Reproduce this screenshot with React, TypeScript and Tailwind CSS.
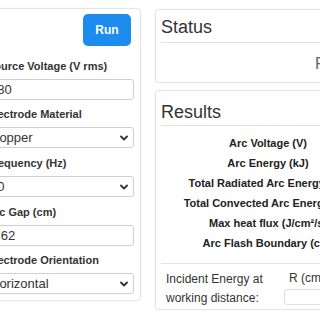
import { ReactNode } from "react";

const font = { fontFamily: '"Liberation Sans", Arial, sans-serif' };

const Chevron = () => (
  <svg width="8" height="6" viewBox="0 0 8 6" className="shrink-0">
    <polyline points="1,1.5 4,4.5 7,1.5" fill="none" stroke="#333" strokeWidth="1.8" strokeLinecap="round" strokeLinejoin="round" />
  </svg>
);

interface FieldProps {
  label: string;
  value: string;
  select?: boolean;
  className?: string;
}

const Field = ({ label, value, select, className }: FieldProps) => (
  <div className={className}>
    <div className="text-[11px] leading-[14px] font-bold text-[#333] whitespace-nowrap">{label}</div>
    <div className="mt-[6px] h-[21px] flex items-center justify-between border border-[#cfcfcf] rounded-[3px] bg-white pl-[2px] pr-[5px]">
      <span className="text-[13px] text-[#333] leading-none">{value}</span>
      {select && <Chevron />}
    </div>
  </div>
);

const Card = ({ children, className }: { children: ReactNode; className?: string }) => (
  <div className={`border border-[#e4e4e4] rounded-[4px] bg-white shadow-[0_0_2px_rgba(0,0,0,0.06)] ${className ?? ""}`}>
    {children}
  </div>
);

const rows = [
  "Arc Voltage (V)",
  "Arc Energy (kJ)",
  "Total Radiated Arc Energy (kJ)",
  "Total Convected Arc Energy (kJ)",
  "Max heat flux (J/cm²/s)",
  "Arc Flash Boundary (cm)",
];

export default function App() {
  return (
    <div className="w-[320px] h-[320px] overflow-hidden bg-white flex items-start" style={font}>
      {/* inputs panel, cut off on the left */}
      <Card className="ml-[-20px] mt-[8px] w-[161px] shrink-0 pl-[6px] pr-[6px] pt-[5px] pb-[6px]">
        <div className="flex">
          <button className="ml-auto mr-[3px] w-[48px] h-[32px] rounded-[5px] bg-[#1c8cef] text-white text-[12px] font-bold">
            Run
          </button>
        </div>
        <Field className="mt-[13px]" label="Source Voltage (V rms)" value="480" />
        <Field className="mt-[7px]" label="Electrode Material" value="Copper" select />
        <Field className="mt-[8px]" label="Frequency (Hz)" value="60" select />
        <Field className="mt-[8px]" label="Arc Gap (cm)" value="1.62" />
        <Field className="mt-[7px]" label="Electrode Orientation" value="Horizontal" select />
      </Card>

      <div className="ml-[14px] mt-[9px] w-[260px] shrink-0 flex flex-col gap-[7px]">
        <Card className="h-[74px] px-[5px]">
          <div className="pt-[6px] pb-[4px] text-[18px] leading-[22px] text-[#333] border-b border-[#e2e2e2]">Status</div>
          <div className="pl-[154px] pt-[11px] text-[16px] leading-[20px] text-[#666]">Ready</div>
        </Card>

        <Card className="h-[220px] px-[5px]">
          <div className="pt-[10px] pb-[2px] text-[18px] leading-[22px] text-[#333] border-b border-[#e2e2e2]">Results</div>
          <div className="pt-[7px] pb-[10px] border-b border-[#e2e2e2]">
            {rows.map((r) => (
              <div key={r} className="flex h-[20px] items-center">
                <div className="w-[214px] shrink-0 text-center text-[11px] font-bold text-[#222] whitespace-nowrap">{r}</div>
              </div>
            ))}
          </div>
          <div className="flex pt-[6px]">
            <div className="pl-[5px] w-[123px] shrink-0 text-[12px] leading-[19px] text-[#333]">
              Incident Energy at
              <br />
              working distance:
            </div>
            <div className="flex flex-col">
              <div className="pl-[5px] text-[12px] leading-[16px] text-[#333] whitespace-nowrap">R (cm)</div>
              <div className="mt-[3px] w-[60px] h-[16px] border border-[#dedede] rounded-[3px] bg-white" />
            </div>
          </div>
        </Card>
      </div>
    </div>
  );
}
